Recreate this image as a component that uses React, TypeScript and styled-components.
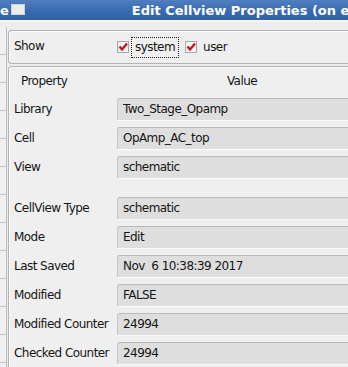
import React from 'react';
import styled, {createGlobalStyle} from 'styled-components';

const GlobalStyle = createGlobalStyle`
    html, body {
        margin: 0;
        padding: 0;
        background: #ededed;
        overflow: hidden;
    }
    body {
        font-family: "DejaVu Sans", Verdana, sans-serif;
        font-size: 12px;
        letter-spacing: -0.55px;
        color: #161616;
    }
`;

const Window = styled.div`
    width: 348px;
    height: 367px;
    overflow: hidden;
    background: #ededed;
`;

const TitleBar = styled.div`
    height: 20px;
    display: flex;
    align-items: center;
    background: linear-gradient(#4f7fc0, #3769b0 60%, #3062a8);
    border-bottom: 2px solid #f6f6f6;
    color: #fff;
    font-weight: bold;
    font-size: 13px;
    letter-spacing: 0;
    white-space: nowrap;
    overflow: hidden;
`;

const Clipped = styled.span`
    margin-left: 0;
`;

const WinIcon = styled.span`
    width: 12px;
    height: 9px;
    margin-left: 2px;
    margin-top: -2px;
    background: #ececec;
    border: 1px solid #c9d3e0;
    flex-shrink: 0;
`;

const Title = styled.span`
    margin-left: 107px;
`;

const Body = styled.div`
    display: flex;
`;

const LeftStrip = styled.div`
    width: 6px;
    flex-shrink: 0;
    margin-top: 5px;
    border-right: 1px solid #bdbdbd;
    display: flex;
    flex-direction: column;
`;

const Tick = styled.div`
    height: 27px;
    flex-shrink: 0;
    border-bottom: 1px solid #c4c4c4;
    background: #f0f0f0;
`;

const Main = styled.div`
    flex: 1;
    min-width: 0;
    padding: 8px 0 0 1px;
`;

const Panel = styled.div`
    width: 400px;
    border: 1px solid #b3b3b3;
    border-right: none;
    border-radius: 4px 0 0 4px;
    background: #efefef;
    box-shadow: inset 1px 1px 0 #fafafa;
`;

const ShowPanel = styled(Panel)`
    height: 32px;
    display: flex;
    align-items: center;
`;

const PropsPanel = styled(Panel)`
    margin-top: 2px;
    height: 400px;
    border-bottom: none;
    border-radius: 4px 0 0 0;
`;

const Label = styled.span`
    width: 103px;
    padding-left: 5px;
    flex-shrink: 0;
    margin-top: -3px;
`;

const Option = styled.label`
    display: flex;
    align-items: center;
    margin-right: 6px;
`;

const OptionText = styled.span<{ $focused?: boolean }>`
    margin-left: 2px;
    padding: 2px 3px 3px;
    border: 1px dotted ${p => (p.$focused ? '#222' : 'transparent')};
`;

const Header = styled.div`
    display: grid;
    grid-template-columns: 108px 250px;
    height: 31px;
    line-height: 28px;
`;

const HeadCell = styled.span<{ $center?: boolean }>`
    padding-left: ${p => (p.$center ? '0' : '12px')};
    text-align: ${p => (p.$center ? 'center' : 'left')};
`;

const Row = styled.div<{ $extra?: number }>`
    display: grid;
    grid-template-columns: 108px 1fr;
    align-items: center;
    height: 22px;
    margin-bottom: 7px;
    margin-top: ${p => p.$extra || 0}px;
`;

const RowLabel = styled.span`
    padding-left: 5px;
    white-space: nowrap;
`;

const Field = styled.div`
    height: 21px;
    line-height: 21px;
    padding-left: 5px;
    background: #dedede;
    border-top: 1px solid #b9b9b9;
    border-left: 1px solid #c6c6c6;
    border-radius: 3px 0 0 0;
    box-shadow: 0 1px 0 #fbfbfb;
    color: #161616;
    white-space: pre;
`;

const Check = () => (
    <svg width="12" height="12" viewBox="0 0 12 12">
        <rect x="0.5" y="0.5" width="11" height="11" fill="#f4f4f4" stroke="#a8a8a8"/>
        <path d="M2.5 5.5 L5 8.5 L10 2.5" fill="none" stroke="#c4161c" strokeWidth="2.4"/>
    </svg>
);

// margins collapse, so the extra gap before a group is the full distance
const rows: { label: string, value: string, extra?: number }[] = [
    {label: 'Library', value: 'Two_Stage_Opamp'},
    {label: 'Cell', value: 'OpAmp_AC_top'},
    {label: 'View', value: 'schematic'},
    {label: 'CellView Type', value: 'schematic', extra: 19},
    {label: 'Mode', value: 'Edit'},
    {label: 'Last Saved', value: 'Nov  6 10:38:39 2017'},
    {label: 'Modified', value: 'FALSE'},
    {label: 'Modified Counter', value: '24994'},
    {label: 'Checked Counter', value: '24994'},
];

const App = () => {
    return (
        <Window>
            <GlobalStyle/>
            <TitleBar>
                <Clipped>e</Clipped>
                <WinIcon/>
                <Title>Edit Cellview Properties (on e</Title>
            </TitleBar>
            <Body>
                <LeftStrip>
                    {Array.from({length: 13}).map((_, i) => <Tick key={i}/>)}
                </LeftStrip>
                <Main>
                    <ShowPanel>
                        <Label>Show</Label>
                        <Option>
                            <Check/>
                            <OptionText $focused>system</OptionText>
                        </Option>
                        <Option>
                            <Check/>
                            <OptionText>user</OptionText>
                        </Option>
                    </ShowPanel>
                    <PropsPanel>
                        <Header>
                            <HeadCell>Property</HeadCell>
                            <HeadCell $center>Value</HeadCell>
                        </Header>
                        {rows.map((row, index) => (
                            <Row key={index} $extra={row.extra}>
                                <RowLabel>{row.label}</RowLabel>
                                <Field>{row.value}</Field>
                            </Row>
                        ))}
                    </PropsPanel>
                </Main>
            </Body>
        </Window>
    );
};

export default App;
